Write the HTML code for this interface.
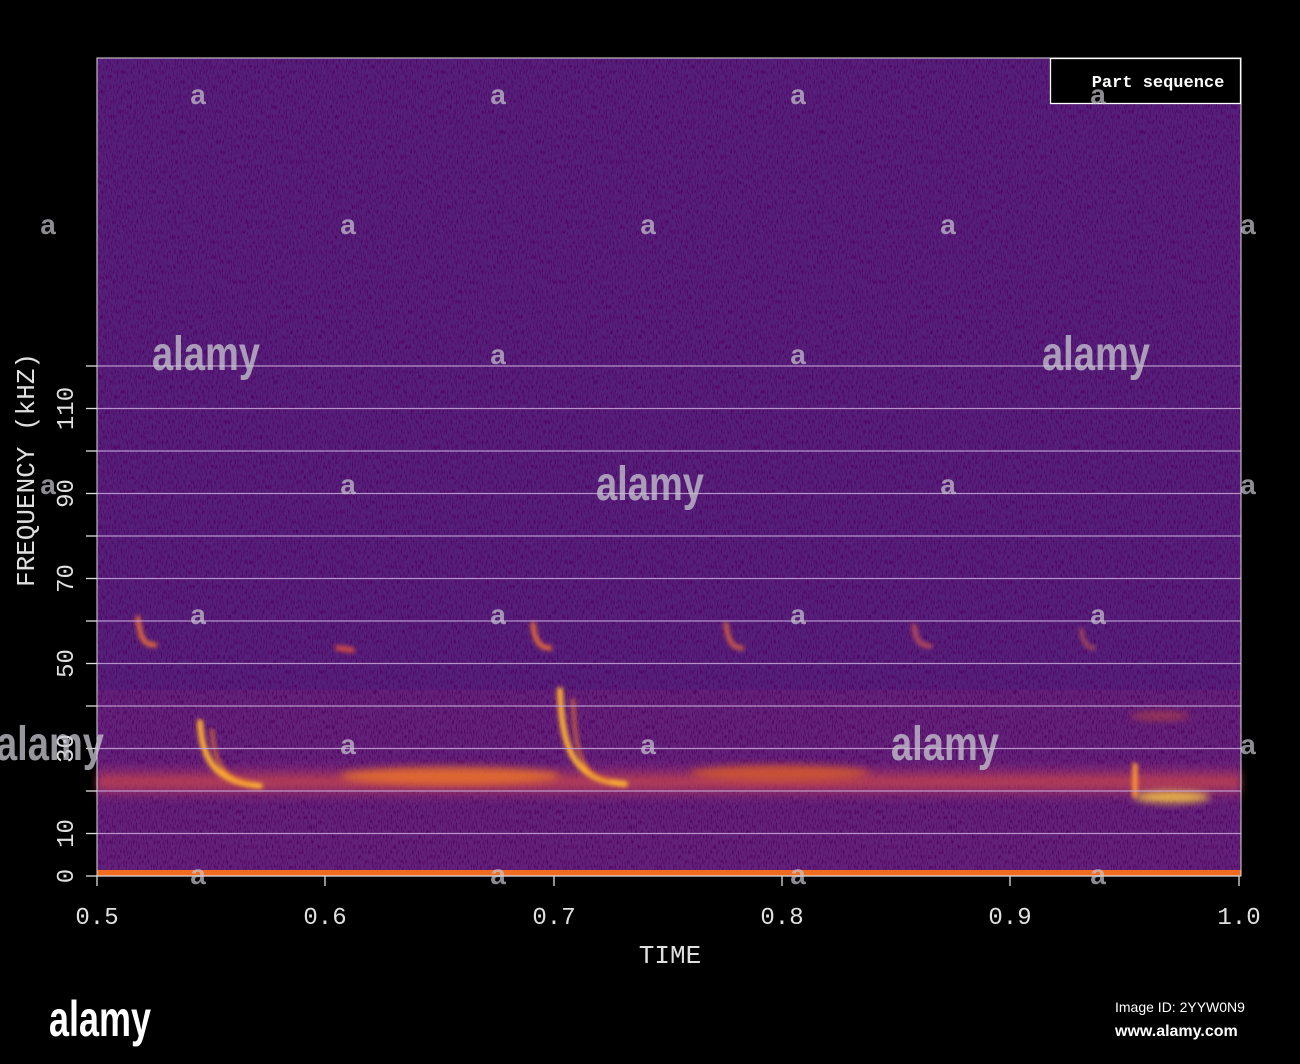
<!DOCTYPE html><html><head><style>body{margin:0;background:#000;width:1300px;height:1064px;overflow:hidden}</style></head><body>
<svg width="1300" height="1064" xmlns="http://www.w3.org/2000/svg" style="display:block">
<defs>
<filter id="n" x="0" y="0" width="100%" height="100%"><feTurbulence type="fractalNoise" baseFrequency="0.8 0.2" numOctaves="2" seed="3"/><feColorMatrix values="0 0 0 0 0.08  0 0 0 0 0  0 0 0 0 0.12  0 0 0 -3 1.6"/></filter>
<filter id="b" x="-50%" y="-50%" width="200%" height="200%"><feGaussianBlur stdDeviation="4"/></filter>
<filter id="b2" x="-50%" y="-50%" width="200%" height="200%"><feGaussianBlur stdDeviation="2"/></filter>
<linearGradient id="band" x1="0" y1="0" x2="0" y2="1"><stop offset="0" stop-color="#a03070" stop-opacity="0"/><stop offset="0.5" stop-color="#d04848"/><stop offset="1" stop-color="#a03070" stop-opacity="0"/></linearGradient>
</defs>
<rect x="97" y="58" width="1144" height="818" fill="#55207a"/>
<rect x="97" y="690" width="1144" height="186" fill="#702478" opacity="0.55"/>
<rect x="97" y="58" width="1144" height="818" filter="url(#n)"/>
<rect x="97" y="762" width="1144" height="40" fill="url(#band)" opacity="0.85" filter="url(#b)"/>
<g filter="url(#b)" opacity="0.85">
<ellipse cx="450" cy="776" rx="110" ry="9" fill="#e8702a"/>
<ellipse cx="780" cy="773" rx="90" ry="8" fill="#d4582e"/>
<ellipse cx="1172" cy="797" rx="38" ry="6" fill="#ffd040"/>
<ellipse cx="1160" cy="716" rx="30" ry="4" fill="#b0404a"/>
</g>
<g fill="none" stroke-linecap="round" filter="url(#b2)">
<path d="M200 722 C202 765 220 782 260 786" stroke="#ffb030" stroke-width="6"/>
<path d="M212 730 C214 765 225 778 250 782" stroke="#e07030" stroke-width="3"/>
<path d="M560 690 C562 760 580 780 625 784" stroke="#ffb030" stroke-width="6"/>
<path d="M573 700 C575 760 585 775 610 780" stroke="#e07030" stroke-width="3"/>
<path d="M1135 765 L1135 795" stroke="#ff9a30" stroke-width="5"/>
<path d="M138 618 C140 640 145 645 155 645" stroke="#e06a3a" stroke-width="5"/>
<path d="M338 648 L352 650" stroke="#c84a4a" stroke-width="6"/>
<path d="M533 624 C535 642 540 648 550 648" stroke="#e06a3a" stroke-width="5"/>
<path d="M726 624 C728 642 733 648 742 648" stroke="#c85a4a" stroke-width="5"/>
<path d="M914 626 C916 642 921 646 930 646" stroke="#b84a5a" stroke-width="5"/>
<path d="M1081 630 C1083 642 1087 648 1094 648" stroke="#a84a5a" stroke-width="4"/>
</g>
<rect x="97" y="870" width="1144" height="6" fill="#f06a20"/>
<g stroke="#c8a8d8" stroke-width="1.2" opacity="0.85">
<line x1="97" x2="1241" y1="833.5" y2="833.5"/><line x1="97" x2="1241" y1="791" y2="791"/><line x1="97" x2="1241" y1="748.5" y2="748.5"/><line x1="97" x2="1241" y1="706" y2="706"/><line x1="97" x2="1241" y1="663.5" y2="663.5"/><line x1="97" x2="1241" y1="621" y2="621"/><line x1="97" x2="1241" y1="578.5" y2="578.5"/><line x1="97" x2="1241" y1="536" y2="536"/><line x1="97" x2="1241" y1="493.5" y2="493.5"/><line x1="97" x2="1241" y1="451" y2="451"/><line x1="97" x2="1241" y1="408.5" y2="408.5"/><line x1="97" x2="1241" y1="366" y2="366"/>
</g>
<rect x="97" y="58" width="1144" height="818" fill="none" stroke="#ddd" stroke-width="1"/>
<g stroke="#ddd" stroke-width="1.3">
<line x1="86" x2="97" y1="876" y2="876"/><line x1="86" x2="97" y1="833.5" y2="833.5"/><line x1="86" x2="97" y1="791" y2="791"/><line x1="86" x2="97" y1="748.5" y2="748.5"/><line x1="86" x2="97" y1="706" y2="706"/><line x1="86" x2="97" y1="663.5" y2="663.5"/><line x1="86" x2="97" y1="621" y2="621"/><line x1="86" x2="97" y1="578.5" y2="578.5"/><line x1="86" x2="97" y1="536" y2="536"/><line x1="86" x2="97" y1="493.5" y2="493.5"/><line x1="86" x2="97" y1="451" y2="451"/><line x1="86" x2="97" y1="408.5" y2="408.5"/><line x1="86" x2="97" y1="366" y2="366"/>
<line x1="97" x2="97" y1="876" y2="886"/><line x1="325" x2="325" y1="876" y2="886"/><line x1="554" x2="554" y1="876" y2="886"/><line x1="782" x2="782" y1="876" y2="886"/><line x1="1010" x2="1010" y1="876" y2="886"/><line x1="1239" x2="1239" y1="876" y2="886"/>
<line x1="97" x2="1239" y1="876" y2="876"/>
</g>
<g font-family="Liberation Mono, monospace" font-size="24" fill="#e0e0e0" text-anchor="middle">
<text x="97" y="924">0.5</text><text x="325" y="924">0.6</text><text x="554" y="924">0.7</text><text x="782" y="924">0.8</text><text x="1010" y="924">0.9</text><text x="1239" y="924">1.0</text>
<text x="670" y="963" font-size="26">TIME</text>
<g transform="rotate(-90)">
<text x="-876" y="73">0</text><text x="-833.5" y="73">10</text><text x="-748.5" y="73">30</text><text x="-663.5" y="73">50</text><text x="-578.5" y="73">70</text><text x="-493.5" y="73">90</text><text x="-408.5" y="73">110</text>
<text x="-470" y="34" font-size="26">FREQUENCY (kHZ)</text>
</g>
</g>
<rect x="1050.5" y="58.5" width="190" height="45" fill="#000" stroke="#fff" stroke-width="1.3"/>
<text x="1158" y="87" font-family="Liberation Mono, monospace" font-weight="bold" font-size="17" fill="#fff" text-anchor="middle">Part sequence</text>
<g font-family="Liberation Sans, sans-serif" font-weight="bold" fill="#c8c8d0" opacity="0.75" text-anchor="middle">
<text x="206" y="370" font-size="48" textLength="108" lengthAdjust="spacingAndGlyphs">alamy</text>
<text x="1096" y="370" font-size="48" textLength="108" lengthAdjust="spacingAndGlyphs">alamy</text>
<text x="650" y="500" font-size="48" textLength="108" lengthAdjust="spacingAndGlyphs">alamy</text>
<text x="945" y="760" font-size="48" textLength="108" lengthAdjust="spacingAndGlyphs">alamy</text>
<text x="50" y="760" font-size="48" textLength="108" lengthAdjust="spacingAndGlyphs">alamy</text>
</g>
<g font-family="Liberation Sans, sans-serif" font-weight="bold" font-size="28" fill="#c8c8d0" opacity="0.7" text-anchor="middle">
<text x="198" y="104">a</text><text x="498" y="104">a</text><text x="798" y="104">a</text><text x="1098" y="104">a</text>
<text x="48" y="234">a</text><text x="348" y="234">a</text><text x="648" y="234">a</text><text x="948" y="234">a</text><text x="1248" y="234">a</text>
<text x="498" y="364">a</text><text x="798" y="364">a</text>
<text x="48" y="494">a</text><text x="348" y="494">a</text><text x="948" y="494">a</text><text x="1248" y="494">a</text>
<text x="198" y="624">a</text><text x="498" y="624">a</text><text x="798" y="624">a</text><text x="1098" y="624">a</text>
<text x="348" y="754">a</text><text x="648" y="754">a</text><text x="1248" y="754">a</text>
<text x="198" y="884">a</text><text x="498" y="884">a</text><text x="798" y="884">a</text><text x="1098" y="884">a</text>
</g>
<text x="100" y="1036" font-family="Liberation Sans, sans-serif" font-weight="bold" font-size="50" fill="#fff" text-anchor="middle" textLength="102" lengthAdjust="spacingAndGlyphs">alamy</text>
<text x="1115" y="1012" font-family="Liberation Sans, sans-serif" font-size="14" fill="#fff">Image ID: 2YYW0N9</text>
<text x="1115" y="1036" font-family="Liberation Sans, sans-serif" font-weight="bold" font-size="16" fill="#fff">www.alamy.com</text>
</svg></body></html>
